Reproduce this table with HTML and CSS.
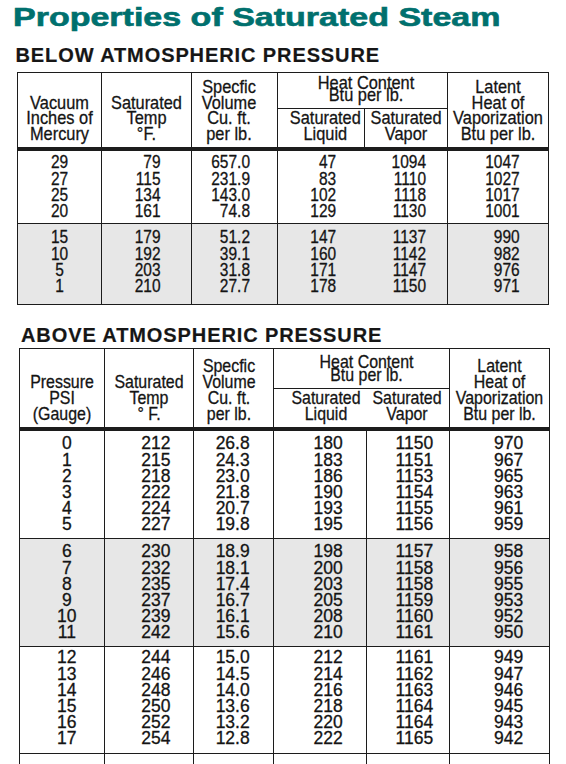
FILE: index.html
```html
<!DOCTYPE html>
<html lang="en">
<head>
<meta charset="utf-8">
<title>Properties of Saturated Steam</title>
<link rel="stylesheet" href="styles.css">
</head>
<body>
<main class="page">
  <h1 class="title"><span class="title-text">Properties of Saturated Steam</span></h1>

  <h2 class="section-title below">BELOW ATMOSPHERIC PRESSURE</h2>
  <table class="steam t-below">
    <colgroup><col class="w1"><col class="w2"><col class="w3"><col class="w4"><col class="w5"><col class="w6"></colgroup>
    <thead>
      <tr class="ra">
        <th rowspan="2"><span>Vacuum<br>Inches of<br>Mercury</span></th>
        <th rowspan="2"><span>Saturated<br>Temp<br>°F.</span></th>
        <th rowspan="2" class="h-vol"><span>Specfic<br>Volume<br>Cu. ft.<br>per lb.</span></th>
        <th colspan="2" class="h-heat"><span>Heat Content<br>Btu per lb.</span></th>
        <th rowspan="2"><span>Latent<br>Heat of<br>Vaporization<br>Btu per lb.</span></th>
      </tr>
      <tr class="rb">
        <th class="h-liq"><span>Saturated<br>Liquid</span></th>
        <th class="h-vap"><span>Saturated<br>Vapor</span></th>
      </tr>
    </thead>
    <tbody class="g g1">
      <tr><td><span>29</span></td><td><span>79</span></td><td><span>657.0</span></td><td><span>47</span></td><td><span>1094</span></td><td><span>1047</span></td></tr>
      <tr><td><span>27</span></td><td><span>115</span></td><td><span>231.9</span></td><td><span>83</span></td><td><span>1110</span></td><td><span>1027</span></td></tr>
      <tr><td><span>25</span></td><td><span>134</span></td><td><span>143.0</span></td><td><span>102</span></td><td><span>1118</span></td><td><span>1017</span></td></tr>
      <tr><td><span>20</span></td><td><span>161</span></td><td><span>74.8</span></td><td><span>129</span></td><td><span>1130</span></td><td><span>1001</span></td></tr>
    </tbody>
    <tbody class="g g2 shade">
      <tr><td><span>15</span></td><td><span>179</span></td><td><span>51.2</span></td><td><span>147</span></td><td><span>1137</span></td><td><span>990</span></td></tr>
      <tr><td><span>10</span></td><td><span>192</span></td><td><span>39.1</span></td><td><span>160</span></td><td><span>1142</span></td><td><span>982</span></td></tr>
      <tr><td><span>5</span></td><td><span>203</span></td><td><span>31.8</span></td><td><span>171</span></td><td><span>1147</span></td><td><span>976</span></td></tr>
      <tr><td><span>1</span></td><td><span>210</span></td><td><span>27.7</span></td><td><span>178</span></td><td><span>1150</span></td><td><span>971</span></td></tr>
    </tbody>
  </table>

  <h2 class="section-title above">ABOVE ATMOSPHERIC PRESSURE</h2>
  <table class="steam t-above">
    <colgroup><col class="w1"><col class="w2"><col class="w3"><col class="w4"><col class="w5"><col class="w6"></colgroup>
    <thead>
      <tr class="ra">
        <th rowspan="2"><span>Pressure<br>PSI<br>(Gauge)</span></th>
        <th rowspan="2"><span>Saturated<br>Temp<br>° F.</span></th>
        <th rowspan="2" class="h-vol"><span>Specfic<br>Volume<br>Cu. ft.<br>per lb.</span></th>
        <th colspan="2" class="h-heat"><span>Heat Content<br>Btu per lb.</span></th>
        <th rowspan="2"><span>Latent<br>Heat of<br>Vaporization<br>Btu per lb.</span></th>
      </tr>
      <tr class="rb">
        <th class="h-liq"><span>Saturated<br>Liquid</span></th>
        <th class="h-vap"><span>Saturated<br>Vapor</span></th>
      </tr>
    </thead>
    <tbody class="g g1">
      <tr><td><span>0</span></td><td><span>212</span></td><td><span>26.8</span></td><td><span>180</span></td><td><span>1150</span></td><td><span>970</span></td></tr>
      <tr><td><span>1</span></td><td><span>215</span></td><td><span>24.3</span></td><td><span>183</span></td><td><span>1151</span></td><td><span>967</span></td></tr>
      <tr><td><span>2</span></td><td><span>218</span></td><td><span>23.0</span></td><td><span>186</span></td><td><span>1153</span></td><td><span>965</span></td></tr>
      <tr><td><span>3</span></td><td><span>222</span></td><td><span>21.8</span></td><td><span>190</span></td><td><span>1154</span></td><td><span>963</span></td></tr>
      <tr><td><span>4</span></td><td><span>224</span></td><td><span>20.7</span></td><td><span>193</span></td><td><span>1155</span></td><td><span>961</span></td></tr>
      <tr><td><span>5</span></td><td><span>227</span></td><td><span>19.8</span></td><td><span>195</span></td><td><span>1156</span></td><td><span>959</span></td></tr>
    </tbody>
    <tbody class="g g2 shade">
      <tr><td><span>6</span></td><td><span>230</span></td><td><span>18.9</span></td><td><span>198</span></td><td><span>1157</span></td><td><span>958</span></td></tr>
      <tr><td><span>7</span></td><td><span>232</span></td><td><span>18.1</span></td><td><span>200</span></td><td><span>1158</span></td><td><span>956</span></td></tr>
      <tr><td><span>8</span></td><td><span>235</span></td><td><span>17.4</span></td><td><span>203</span></td><td><span>1158</span></td><td><span>955</span></td></tr>
      <tr><td><span>9</span></td><td><span>237</span></td><td><span>16.7</span></td><td><span>205</span></td><td><span>1159</span></td><td><span>953</span></td></tr>
      <tr><td><span>10</span></td><td><span>239</span></td><td><span>16.1</span></td><td><span>208</span></td><td><span>1160</span></td><td><span>952</span></td></tr>
      <tr><td><span>11</span></td><td><span>242</span></td><td><span>15.6</span></td><td><span>210</span></td><td><span>1161</span></td><td><span>950</span></td></tr>
    </tbody>
    <tbody class="g g3">
      <tr><td><span>12</span></td><td><span>244</span></td><td><span>15.0</span></td><td><span>212</span></td><td><span>1161</span></td><td><span>949</span></td></tr>
      <tr><td><span>13</span></td><td><span>246</span></td><td><span>14.5</span></td><td><span>214</span></td><td><span>1162</span></td><td><span>947</span></td></tr>
      <tr><td><span>14</span></td><td><span>248</span></td><td><span>14.0</span></td><td><span>216</span></td><td><span>1163</span></td><td><span>946</span></td></tr>
      <tr><td><span>15</span></td><td><span>250</span></td><td><span>13.6</span></td><td><span>218</span></td><td><span>1164</span></td><td><span>945</span></td></tr>
      <tr><td><span>16</span></td><td><span>252</span></td><td><span>13.2</span></td><td><span>220</span></td><td><span>1164</span></td><td><span>943</span></td></tr>
      <tr><td><span>17</span></td><td><span>254</span></td><td><span>12.8</span></td><td><span>222</span></td><td><span>1165</span></td><td><span>942</span></td></tr>
    </tbody>
    <tbody class="g g4">
      <tr><td></td><td></td><td></td><td></td><td></td><td></td></tr>
    </tbody>
  </table>
</main>
</body>
</html>
```
FILE: styles.css
```css
html, body {
  margin: 0;
  padding: 0;
  background: #fff;
}

body {
  width: 566px;
  height: 764px;
  overflow: hidden;
  font-family: "Liberation Sans", Arial, sans-serif;
  color: #141414;
}

.page {
  padding-top: 5.4px;
}

/* ---------- headings ---------- */
.title {
  margin: 0 0 0 13.4px;
  height: 25px;
  font-size: 25px;
  line-height: 25px;
  font-weight: 700;
  color: #00706e;
  -webkit-text-stroke: 0.6px #00706e;
}

.title-text {
  display: inline-block;
  white-space: nowrap;
  transform: scaleX(1.36);
  transform-origin: 0 50%;
}

.section-title {
  margin: 0;
  font-size: 20px;
  line-height: 20px;
  font-weight: 700;
  letter-spacing: 0.9px;
  color: #161616;
  white-space: nowrap;
  -webkit-text-stroke: 0.2px #161616;
}

.below {
  margin: 15px 0 0 15.5px;
}

.above {
  margin: 19.7px 0 0 21px;
}

/* ---------- tables ---------- */
.steam {
  border-collapse: separate;
  border-spacing: 0;
  table-layout: fixed;
  width: 531px;
  border-top: 1px solid #1c1c1c;
  border-left: 1px solid #1c1c1c;
  -webkit-text-stroke: 0.3px #141414;
}

.steam th,
.steam td {
  padding: 0;
  border-right: 1px solid #1c1c1c;
  white-space: nowrap;
}

.steam th {
  font-weight: normal;
  text-align: center;
  vertical-align: bottom;
  padding-bottom: 5px;
  border-bottom: 4px solid #1c1c1c;
}

.steam th span {
  display: block;
  margin: 0 -24px;
}

.steam .h-heat {
  vertical-align: top;
  padding-bottom: 0;
  border-bottom: 1px solid #1c1c1c;
}

.steam td {
  text-align: right;
}

.steam td:first-child {
  text-align: center;
}

.steam td span {
  display: block;
}

.g tr:last-child td {
  border-bottom: 1px solid #1c1c1c;
}

.shade td {
  background: #e7e7e7;
}

/* ---------- below atmospheric ---------- */
.t-below {
  margin: 6.6px 0 0 17px;
}

.t-below .w1 { width: 84px; }
.t-below .w2 { width: 90px; }
.t-below .w3 { width: 86px; }
.t-below .w4 { width: 87px; }
.t-below .w5 { width: 83px; }
.t-below .w6 { width: 101px; }

.t-below .ra { height: 36px; }
.t-below .rb { height: 42px; }

.t-below th {
  font-size: 18.6px;
  line-height: 15.8px;
}

.t-below th span {
  transform: scaleX(0.88);
}

.t-below .h-heat {
  line-height: 12px;
  padding-top: 4px;
  padding-left: 7px;
}

.t-below .h-vol { padding-right: 11px; }
.t-below .h-liq { padding-left: 9.4px; }

.t-below td {
  font-size: 18px;
  line-height: 16.2px;
}

.t-below td span {
  transform: scaleX(0.86);
  transform-origin: 100% 50%;
}

.t-below td:first-child span {
  transform-origin: 50% 50%;
}

.t-below td:nth-child(2) { padding-right: 30.5px; }
.t-below td:nth-child(3) { padding-right: 27px; }
.t-below td:nth-child(4) { padding-right: 28.8px; border-right: 0; }
.t-below td:nth-child(5) { padding-right: 21px; }
.t-below td:nth-child(6) { padding-right: 28.3px; }

.t-below .g1 tr:first-child td { padding-top: 3.5px; }
.t-below .g1 tr:last-child td { padding-bottom: 4px; }
.t-below .g2 tr:first-child td { padding-top: 5px; }
.t-below .g2 tr:last-child td { padding-bottom: 10px; }

/* ---------- above atmospheric ---------- */
.t-above {
  margin: 3.3px 0 0 19px;
}

.t-above .w1 { width: 85px; }
.t-above .w2 { width: 89px; }
.t-above .w3 { width: 80px; }
.t-above .w4 { width: 93px; }
.t-above .w5 { width: 83px; }
.t-above .w6 { width: 100px; }

.t-above .ra { height: 40px; }
.t-above .rb { height: 42px; }

.t-above th {
  font-size: 17.7px;
  line-height: 16px;
}

.t-above th span {
  transform: scaleX(0.9);
}

.t-above .h-heat {
  line-height: 13.3px;
  padding-top: 7px;
  padding-left: 10px;
}

.t-above .h-vol { padding-right: 9px; }
.t-above .h-liq { padding-left: 11px; border-right: 0; }
.t-above .h-vap { padding-right: 2px; }

.t-above td {
  font-size: 17.5px;
  line-height: 16.2px;
}

.t-above td:nth-child(1) { padding-left: 9.6px; }
.t-above td:nth-child(2) { padding-right: 22.6px; }
.t-above td:nth-child(3) { padding-right: 23.3px; }
.t-above td:nth-child(4) { padding-right: 23.3px; }
.t-above td:nth-child(5) { padding-right: 15.8px; }
.t-above td:nth-child(6) { padding-right: 25.9px; }

.t-above .g1 tr:first-child td { padding-top: 4.3px; }
.t-above .g1 tr:last-child td { padding-bottom: 5.8px; }
.t-above .g2 tr:first-child td { padding-top: 4px; }
.t-above .g2 tr:last-child td { padding-bottom: 5.5px; }
.t-above .g3 tr:first-child td { padding-top: 2.3px; }
.t-above .g3 tr:last-child td { padding-bottom: 6.8px; }

.t-above .g4 tr { height: 24px; }
.t-above .g4 tr:last-child td { border-bottom: 0; }
```
